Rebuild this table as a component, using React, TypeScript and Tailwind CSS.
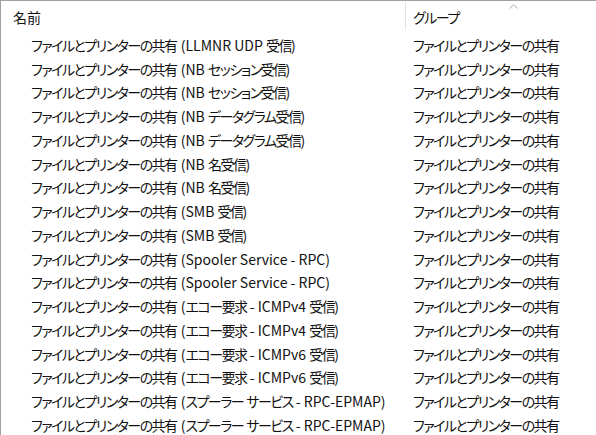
import React from "react";

const suffixes = [
  "(LLMNR UDP 受信)",
  "(NB セッション受信)",
  "(NB セッション受信)",
  "(NB データグラム受信)",
  "(NB データグラム受信)",
  "(NB 名受信)",
  "(NB 名受信)",
  "(SMB 受信)",
  "(SMB 受信)",
  "(Spooler Service - RPC)",
  "(Spooler Service - RPC)",
  "(エコー要求 - ICMPv4 受信)",
  "(エコー要求 - ICMPv4 受信)",
  "(エコー要求 - ICMPv6 受信)",
  "(エコー要求 - ICMPv6 受信)",
  "(スプーラー サービス - RPC-EPMAP)",
  "(スプーラー サービス - RPC-EPMAP)",
];

const font = {
  fontFamily: '"Noto Sans CJK JP", "Noto Sans", sans-serif',
  fontFeatureSettings: '"palt"',
};

const CJK = /([\u3040-\u30ff\u4e00-\u9fff]+)/;

function Styled({ text }: { text: string }) {
  const parts = text.split(CJK);
  return (
    <>
      {parts.map((p, i) =>
        CJK.test(p) ? (
          <span key={i} className="tracking-[-1.5px]">
            {p}
          </span>
        ) : (
          <span key={i}>{p}</span>
        )
      )}
    </>
  );
}

const PREFIX = "ファイルとプリンターの共有";

export default function App() {
  return (
    <div
      className="w-[596px] h-[435px] overflow-hidden bg-white border-t border-l border-[#a0a0a0] text-[14px] text-[#111] leading-none"
      style={font}
    >
      <div className="relative flex h-[32px]">
        <div className="w-[404px] flex items-center pl-[12px]">名前</div>
        <div className="w-px h-[28px] mt-[1px] bg-[#e5e5e5]" />
        <div className="flex-1 flex items-center pl-[7px]">
          <Styled text="グループ" />
        </div>
        <svg
          className="absolute left-[508px] top-[3px]"
          width="9"
          height="5"
          viewBox="0 0 9 5"
        >
          <path d="M0.5 4.5 L4.5 0.8 L8.5 4.5" fill="none" stroke="#a8a8a8" strokeWidth="1" />
        </svg>
      </div>
      <div className="flex flex-col">
        {suffixes.map((s, i) => (
          <div key={i} className="flex h-[23.75px] items-center shrink-0">
            <div className="w-[405px] pl-[30px] whitespace-nowrap">
              <Styled text={PREFIX} />
              <span className="ml-[1px]"> </span>
              <Styled text={s} />
            </div>
            <div className="pl-[7px] whitespace-nowrap">
              <Styled text={PREFIX} />
            </div>
          </div>
        ))}
      </div>
    </div>
  );
}
